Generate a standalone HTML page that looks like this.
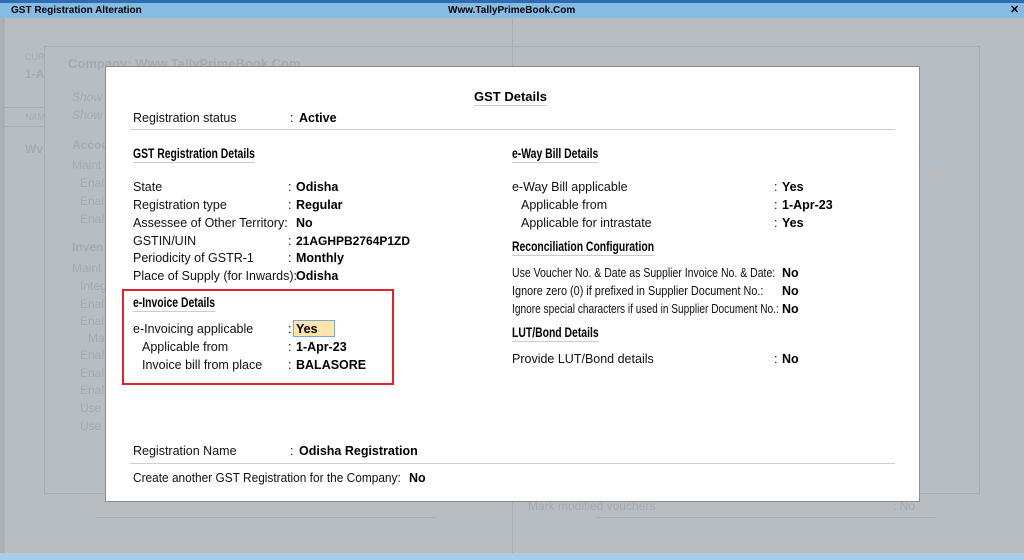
<!DOCTYPE html>
<html><head><style>
*{margin:0;padding:0;box-sizing:border-box}
body{width:1024px;height:560px;overflow:hidden;background:#b8bdc1;font-family:"Liberation Sans",sans-serif;position:relative;color:#000}
.a{position:absolute;white-space:nowrap;line-height:14px}
.f{color:#a5aaae;font-size:12px}
.l{font-size:12.5px;color:#111}
.v{font-size:12.5px;font-weight:bold;color:#000}
.h{font-weight:bold;font-size:13.5px;border-bottom:1px solid #ccc;padding-bottom:1px;transform:scaleX(.77);transform-origin:0 0}
.n{font-size:12.5px;color:#111;transform-origin:0 0}
</style></head><body>
<div class="a" style="left:0;top:0;width:1024px;height:3px;background:#2f6db3"></div>
<div class="a" style="left:0;top:3px;width:1024px;height:15px;background:#86bbe4"></div>
<div class="a" style="left:11px;top:4px;font-size:10px;font-weight:bold">GST Registration Alteration</div>
<div class="a" style="left:448px;top:4px;font-size:10px;font-weight:bold">Www.TallyPrimeBook.Com</div>
<div class="a" style="left:1010px;top:3px;font-size:11px;font-weight:bold">✕</div>
<div class="a" style="left:0;top:18px;width:5px;height:542px;background:#aab0b4"></div>
<div class="a" style="left:0;top:553px;width:1024px;height:7px;background:#a9cde8"></div>
<div class="a" style="left:512px;top:18px;width:1px;height:535px;background:#a8adb1"></div>
<div class="a" style="left:44px;top:46px;width:936px;height:448px;border:1px solid #a9aeb2"></div>
<div class="a" style="left:4px;top:107px;width:40px;height:1px;background:#a9aeb2"></div>
<div class="a" style="left:4px;top:126px;width:40px;height:1px;background:#a9aeb2"></div>
<div class="a f" style="left:25px;top:50px;font-size:9px">CUR</div>
<div class="a f" style="left:25px;top:67px;font-weight:bold">1-A</div>
<div class="a f" style="left:25px;top:110px;font-size:9px">NAM</div>
<div class="a f" style="left:25px;top:142px;font-weight:bold">Wv</div>
<div class="a f" style="left:68px;top:57px;font-size:13px;font-weight:bold">Company: Www.TallyPrimeBook.Com</div>
<div class="a f" style="left:72px;top:90px;font-style:italic">Show</div>
<div class="a f" style="left:72px;top:108px;font-style:italic">Show</div>
<div class="a f" style="left:72px;top:138px;font-weight:bold">Accou</div>
<div class="a f" style="left:72px;top:158px">Maint</div>
<div class="a f" style="left:80px;top:176px">Enal</div>
<div class="a f" style="left:80px;top:194px">Enal</div>
<div class="a f" style="left:80px;top:212px">Enal</div>
<div class="a f" style="left:72px;top:240px;font-weight:bold">Inven</div>
<div class="a f" style="left:72px;top:261px">Maint</div>
<div class="a f" style="left:80px;top:279px">Integ</div>
<div class="a f" style="left:80px;top:297px">Enal</div>
<div class="a f" style="left:80px;top:314px">Enal</div>
<div class="a f" style="left:88px;top:331px">Ma</div>
<div class="a f" style="left:80px;top:348px">Enal</div>
<div class="a f" style="left:80px;top:366px">Enal</div>
<div class="a f" style="left:80px;top:383px">Enal</div>
<div class="a f" style="left:80px;top:401px">Use</div>
<div class="a f" style="left:80px;top:419px">Use</div>
<div class="a" style="left:918px;top:146px;width:32px;height:16px;border:1px solid #a9c3da"></div>
<div class="a f" style="left:528px;top:499px">Mark modified vouchers</div>
<div class="a f" style="left:893px;top:499px">: No</div>
<div class="a" style="left:96px;top:517px;width:340px;height:1px;background:#a9aeb2"></div>
<div class="a" style="left:596px;top:517px;width:340px;height:1px;background:#a9aeb2"></div>

<div class="a" style="left:105px;top:66px;width:815px;height:436px;background:#fff;border:1px solid #8a8e92"></div>
<div class="a" style="left:474px;top:90px;font-size:13px;font-weight:bold;border-bottom:1px solid #ccc;padding-bottom:1px">GST Details</div>
<div class="a l" style="left:133px;top:111px">Registration status</div>
<div class="a l" style="left:290px;top:111px">:</div>
<div class="a v" style="left:299px;top:111px">Active</div>
<div class="a" style="left:130px;top:129px;width:765px;height:1px;background:#d0d0d0"></div>
<div class="a h" style="left:133px;top:147px">GST Registration Details</div>
<div class="a l" style="left:133px;top:180px">State</div>
<div class="a l" style="left:133px;top:198px">Registration type</div>
<div class="a l" style="left:133px;top:216px">Assessee of Other Territory:</div>
<div class="a l" style="left:133px;top:234px">GSTIN/UIN</div>
<div class="a l" style="left:133px;top:251px">Periodicity of GSTR-1</div>
<div class="a l" style="left:133px;top:269px">Place of Supply (for Inwards):</div>
<div class="a l" style="left:288px;top:180px">:</div>
<div class="a l" style="left:288px;top:198px">:</div>
<div class="a l" style="left:288px;top:234px">:</div>
<div class="a l" style="left:288px;top:251px">:</div>
<div class="a v" style="left:296px;top:180px">Odisha</div>
<div class="a v" style="left:296px;top:198px">Regular</div>
<div class="a v" style="left:296px;top:216px">No</div>
<div class="a v" style="left:296px;top:234px;font-size:12px">21AGHPB2764P1ZD</div>
<div class="a v" style="left:296px;top:251px">Monthly</div>
<div class="a v" style="left:296px;top:269px">Odisha</div>
<div class="a" style="left:122px;top:289px;width:272px;height:96px;border:2px solid #e8202a"></div>
<div class="a h" style="left:133px;top:296px">e-Invoice Details</div>
<div class="a l" style="left:133px;top:322px">e-Invoicing applicable</div>
<div class="a l" style="left:142px;top:340px">Applicable from</div>
<div class="a l" style="left:142px;top:358px">Invoice bill from place</div>
<div class="a l" style="left:288px;top:322px">:</div>
<div class="a l" style="left:288px;top:340px">:</div>
<div class="a l" style="left:288px;top:358px">:</div>
<div class="a" style="left:293px;top:320px;width:42px;height:17px;background:#fde4a8;border:1px solid #7aa7d3"></div>
<div class="a v" style="left:296px;top:322px">Yes</div>
<div class="a v" style="left:296px;top:340px">1-Apr-23</div>
<div class="a v" style="left:296px;top:358px">BALASORE</div>
<div class="a l" style="left:133px;top:444px">Registration Name</div>
<div class="a l" style="left:290px;top:444px">:</div>
<div class="a v" style="left:299px;top:444px">Odisha Registration</div>
<div class="a" style="left:130px;top:463px;width:765px;height:1px;background:#d0d0d0"></div>
<div class="a n" style="left:133px;top:471px;transform:scaleX(.95)">Create another GST Registration for the Company:</div>
<div class="a v" style="left:409px;top:471px">No</div>

<div class="a h" style="left:512px;top:147px">e-Way Bill Details</div>
<div class="a l" style="left:512px;top:180px">e-Way Bill applicable</div>
<div class="a l" style="left:521px;top:198px">Applicable from</div>
<div class="a l" style="left:521px;top:216px">Applicable for intrastate</div>
<div class="a l" style="left:774px;top:180px">:</div>
<div class="a l" style="left:774px;top:198px">:</div>
<div class="a l" style="left:774px;top:216px">:</div>
<div class="a v" style="left:782px;top:180px">Yes</div>
<div class="a v" style="left:782px;top:198px">1-Apr-23</div>
<div class="a v" style="left:782px;top:216px">Yes</div>
<div class="a h" style="left:512px;top:240px">Reconciliation Configuration</div>
<div class="a n" style="left:512px;top:266px;transform:scaleX(.84)">Use Voucher No. &amp; Date as Supplier Invoice No. &amp; Date:</div>
<div class="a n" style="left:512px;top:284px;transform:scaleX(.87)">Ignore zero (0) if prefixed in Supplier Document No.:</div>
<div class="a n" style="left:512px;top:302px;transform:scaleX(.81)">Ignore special characters if used in Supplier Document No.:</div>
<div class="a v" style="left:782px;top:266px">No</div>
<div class="a v" style="left:782px;top:284px">No</div>
<div class="a v" style="left:782px;top:302px">No</div>
<div class="a h" style="left:512px;top:326px">LUT/Bond Details</div>
<div class="a l" style="left:512px;top:352px">Provide LUT/Bond details</div>
<div class="a l" style="left:774px;top:352px">:</div>
<div class="a v" style="left:782px;top:352px">No</div>
</body></html>
